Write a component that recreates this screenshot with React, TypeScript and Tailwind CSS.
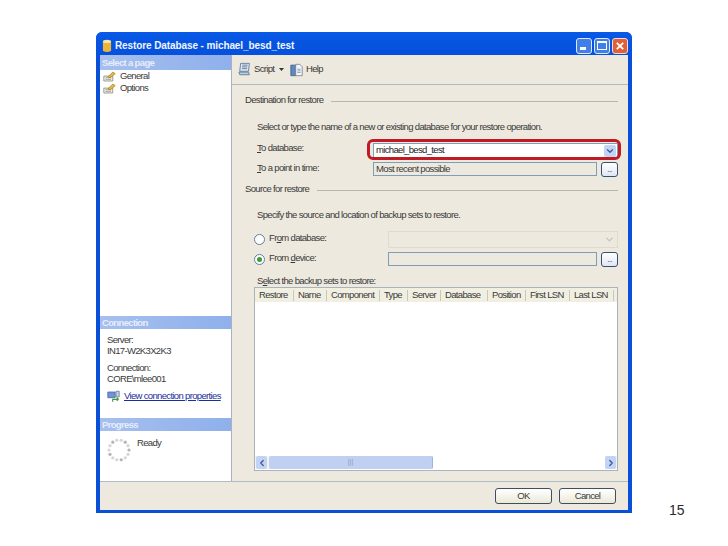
import React from 'react';
import { ChevronDown, ChevronLeft, ChevronRight } from 'lucide-react';

const font = { fontFamily: '"Liberation Sans", Arial, sans-serif' };

const PageIcon = () => (
  <svg width="13" height="11" viewBox="0 0 16 13" className="shrink-0">
    <path d="M1 6h11v6H1z" fill="#f4f1e6" stroke="#8a8a7c" />
    <path d="M3 8h7M3 10h7" stroke="#9a9a90" />
    <path d="M6 7l6-6 3 2-6 5z" fill="#e8b93c" stroke="#8a6a14" strokeWidth="0.7" />
  </svg>
);

const ScriptIcon = () => (
  <svg width="14" height="15" viewBox="0 0 16 16">
    <path d="M3 1h10l-1 9H2z" fill="#dfe8f4" stroke="#5d7896" />
    <path d="M1 11h11l1 3H2z" fill="#b9cde4" stroke="#5d7896" />
    <path d="M5 3h6M4.5 5h6M4.5 7h6" stroke="#5d7896" />
  </svg>
);

const HelpIcon = () => (
  <svg width="13" height="14" viewBox="0 0 16 16">
    <path d="M1 2h6v13H1z" fill="#5f88bd" stroke="#3d628f" />
    <path d="M7 1h5l3 3v11H7z" fill="#f3f6fa" stroke="#6e7f93" />
    <path d="M9 7h4M9 9h4M9 11h4" stroke="#7d8ea4" />
  </svg>
);

const ConnectionIcon = () => (
  <svg width="13" height="13" viewBox="0 0 16 15" className="shrink-0">
    <path d="M1 2h9v7H1z" fill="#6f93d8" stroke="#4b66a6" />
    <path d="M11 1h4v7h-4z" fill="#c6d0e4" stroke="#6b7a98" />
    <path d="M7 14V11h7M12 9l2 2-2 2" fill="none" stroke="#3f9a3c" strokeWidth="1.4" />
  </svg>
);

const Spinner = () => (
  <svg width="24" height="24" viewBox="0 0 24 24" className="shrink-0">
    {Array.from({ length: 14 }).map((_, i) => {
      const a = (i / 14) * Math.PI * 2;
      return (
        <circle
          key={i}
          cx={12 + 10 * Math.cos(a)}
          cy={12 + 10 * Math.sin(a)}
          r="1.6"
          fill={i % 3 === 0 ? '#b4b4b4' : '#d6d6d6'}
        />
      );
    })}
  </svg>
);

const PaneHeader = ({ title, tall }: { title: string; tall?: boolean }) => (
  <div className={`${tall ? 'h-[15px] leading-[15px]' : 'h-[13px] leading-[13px]'} shrink-0 bg-gradient-to-r from-[#a6bfee] to-[#8fb0ec] pl-[2px] text-[9.5px] font-bold text-[#e6edfb]`}>
    {title}
  </div>
);

const GroupTitle = ({ title }: { title: string }) => (
  <div className="flex h-[14px] items-center gap-[8px]">
    <span className="-mt-[2px] whitespace-nowrap">{title}</span>
    <div className="h-px flex-1 bg-[#b9b8a8]" />
  </div>
);

const Underlined = ({ before = '', letter, after }: { before?: string; letter: string; after: string }) => (
  <span className="-mt-[2px] whitespace-nowrap">
    {before}
    <span className="underline">{letter}</span>
    {after}
  </span>
);

const DotsButton = () => (
  <div className="flex h-[15px] w-[17px] shrink-0 items-end justify-center rounded-[3px] border border-[#36506e] bg-gradient-to-b from-white to-[#dfe6f4] pb-[2px] text-[8px] leading-[8px]">
    ...
  </div>
);

const columns = [
  { name: 'Restore', w: 'w-[39px]' },
  { name: 'Name', w: 'w-[33px]' },
  { name: 'Component', w: 'w-[53px]' },
  { name: 'Type', w: 'w-[28px]' },
  { name: 'Server', w: 'w-[33px]' },
  { name: 'Database', w: 'w-[47px]' },
  { name: 'Position', w: 'w-[38px]' },
  { name: 'First LSN', w: 'w-[44px]' },
  { name: 'Last LSN', w: 'w-[44px]' },
];

const App = () => {
  return (
    <div className="relative h-[546px] w-[728px] overflow-hidden bg-white pt-[32px] pl-[96px] text-[9.5px] tracking-[-0.66px] text-[#3a3a3a]" style={font}>
      <div className="flex h-[481px] w-[536px] flex-col rounded-t-[6px] bg-[#0a4fd8]">
        {/* title bar */}
        <div className="flex h-[23px] shrink-0 items-center rounded-t-[6px] bg-gradient-to-b from-[#0a5ae8] via-[#0554e0] to-[#0650dc] pt-[4px] pr-[4px] pl-[6px]">
          <svg width="10" height="14" viewBox="0 0 11 15" className="shrink-0">
            <path d="M1 2.5h9v10c0 2-9 2-9 0z" fill="#eeb43a" />
            <ellipse cx="5.5" cy="2.5" rx="4.5" ry="1.8" fill="#f8e6a8" />
          </svg>
          <span className="ml-[3px] text-[10px] font-bold tracking-[-0.1px] whitespace-nowrap text-[#f0f5ff]">Restore Database - michael_besd_test</span>
          <div className="ml-auto flex gap-[2px]">
            <div className="flex h-[16px] w-[16px] items-end rounded-[3px] border border-[#dfe8fa] bg-[#3f7fe8] pb-[3px] pl-[3px]">
              <div className="h-[3px] w-[6px] bg-white" />
            </div>
            <div className="flex h-[16px] w-[16px] items-center justify-center rounded-[3px] border border-[#dfe8fa] bg-[#3f7fe8]">
              <div className="h-[9px] w-[10px] border border-t-2 border-white" />
            </div>
            <div className="flex h-[16px] w-[16px] items-center justify-center rounded-[3px] border border-[#f0dcd2] bg-[#e0603a]">
              <svg width="10" height="10" viewBox="0 0 11 11">
                <path d="M2 2l7 7M9 2l-7 7" stroke="#fff" strokeWidth="2" />
              </svg>
            </div>
          </div>
        </div>

        {/* body */}
        <div className="mx-[4px] mb-[3px] flex min-h-0 flex-1 flex-col bg-[#ede9de]">
          <div className="flex min-h-0 flex-1">
            {/* left panel */}
            <div className="flex w-[132px] shrink-0 flex-col border-r border-[#a9b3bd] bg-white">
              <PaneHeader title="Select a page" tall />
              <div className="flex h-[12px] items-center gap-[4px] pl-[3px]"><PageIcon />General</div>
              <div className="flex h-[12px] items-center gap-[4px] pl-[3px]"><PageIcon />Options</div>
              <div className="flex-1" />
              <PaneHeader title="Connection" />
              <div className="pt-[5px] pl-[7px] leading-[11px]">
                <div>Server:</div>
                <div>IN17-W2K3X2K3</div>
                <div className="mt-[6px]">Connection:</div>
                <div>CORE\mlee001</div>
              </div>
              <div className="mt-[6px] flex h-[13px] items-center gap-[4px] pl-[7px]">
                <ConnectionIcon />
                <span className="whitespace-nowrap text-[#1c2f9c] underline">View connection properties</span>
              </div>
              <div className="h-[15px] shrink-0" />
              <PaneHeader title="Progress" />
              <div className="flex h-[50px] shrink-0 items-start pt-[6px] pl-[7px]">
                <div className="mt-[1px]"><Spinner /></div>
                <span className="ml-[6px] leading-[12px]">Ready</span>
              </div>
            </div>

            {/* right panel */}
            <div className="flex min-w-0 flex-1 flex-col">
              <div className="flex h-[30px] shrink-0 items-center border-b border-[#aebcc4] pl-[6px]">
                <ScriptIcon />
                <span className="ml-[1px] w-[24px] pl-[1px]">Script</span>
                <svg width="5" height="3" viewBox="0 0 5 3" className="ml-[2px]"><path d="M0 0h5L2.5 3z" fill="#333" /></svg>
                <span className="ml-[6px] flex"><HelpIcon /></span>
                <span className="ml-[3px]">Help</span>
              </div>
              <div className="flex min-h-0 flex-1 flex-col pt-[9px] pr-[10px] pl-[13px]">
                <GroupTitle title="Destination for restore" />
                <div className="mt-[12px] h-[14px] pl-[12px] leading-[14px] whitespace-nowrap">Select or type the name of a new or existing database for your restore operation.</div>
                <div className="mt-[5px] flex h-[20px] items-center pl-[12px]">
                  <div className="flex w-[116px]"><Underlined letter="T" after="o database:" /></div>
                  <div className="relative mt-[3px] flex h-[15px] flex-1 items-center justify-between border border-[#7f9db9] bg-white pr-[1px] pl-[2px] text-[#222]">
                    michael_besd_test
                    <div className="flex h-[12px] w-[12px] items-center justify-center rounded-[2px] bg-[#c3d3f5]">
                      <ChevronDown size={10} strokeWidth={3} className="text-[#3c5a94]" />
                    </div>
                    <div className="absolute -top-[5px] -right-[4px] -bottom-[3px] -left-[7px] rounded-[6px] border-[3px] border-[#c01a24]" />
                  </div>
                </div>
                <div className="flex h-[20px] items-center pl-[12px]">
                  <div className="flex w-[116px]"><Underlined letter="T" after="o a point in time:" /></div>
                  <div className="flex h-[14px] flex-1 items-center border border-[#7f9db9] pl-[2px]">Most recent possible</div>
                  <div className="ml-[4px]"><DotsButton /></div>
                </div>
                <div className="mt-[4px]"><GroupTitle title="Source for restore" /></div>
                <div className="mt-[11px] h-[14px] pl-[12px] leading-[14px] whitespace-nowrap">Specify the source and location of backup sets to restore.</div>
                <div className="mt-[7px] flex h-[20px] items-center pl-[9px]">
                  <div className="h-[11px] w-[11px] shrink-0 rounded-full border border-[#5f7f9c] bg-white" />
                  <span className="ml-[4px] flex w-[119px] shrink-0"><Underlined before="Fr" letter="o" after="m database:" /></span>
                  <div className="flex h-[17px] flex-1 items-center justify-end border border-[#dedbcd] pr-[2px]">
                    <ChevronDown size={11} strokeWidth={3} className="text-[#c4c4bc]" />
                  </div>
                </div>
                <div className="flex h-[20px] items-center pl-[9px]">
                  <div className="flex h-[11px] w-[11px] shrink-0 items-center justify-center rounded-full border border-[#5f7f9c] bg-white">
                    <div className="h-[5px] w-[5px] rounded-full bg-[#3f9a3c]" />
                  </div>
                  <span className="ml-[4px] flex w-[119px] shrink-0"><Underlined before="From " letter="d" after="evice:" /></span>
                  <div className="h-[14px] flex-1 border border-[#7f9db9]" />
                  <div className="ml-[4px]"><DotsButton /></div>
                </div>
                <div className="mt-[6px] h-[12px] pl-[12px] leading-[12px] whitespace-nowrap">S<span className="underline">e</span>lect the backup sets to restore:</div>
                <div className="ml-[9px] flex h-[184px] flex-col border border-[#a9b3bd] bg-white">
                  <div className="flex h-[14px] shrink-0 items-center bg-[#f1efe2]">
                    {columns.map((c) => (
                      <div key={c.name} className={`${c.w} h-[11px] shrink-0 border-r border-[#c9c7ba] pl-[4px] leading-[10px] whitespace-nowrap`}>{c.name}</div>
                    ))}
                  </div>
                  <div className="flex-1" />
                  <div className="mb-[1px] flex h-[13px] shrink-0 items-center bg-[#f4f3ee] px-[1px]">
                    <div className="flex h-[13px] w-[11px] items-center justify-center rounded-[2px] bg-[#c3d3f5]">
                      <ChevronLeft size={10} strokeWidth={3} className="text-[#3c5a94]" />
                    </div>
                    <div className="ml-[2px] flex h-[13px] w-[164px] items-center justify-center rounded-[2px] border-r border-[#9db4dc] bg-[#bfd0f2] text-[7px] tracking-normal text-[#8a9cc0]">|||</div>
                    <div className="h-[13px] flex-1 bg-white" />
                    <div className="flex h-[13px] w-[11px] items-center justify-center rounded-[2px] bg-[#c3d3f5]">
                      <ChevronRight size={10} strokeWidth={3} className="text-[#3c5a94]" />
                    </div>
                  </div>
                </div>
              </div>
            </div>
          </div>

          {/* button bar */}
          <div className="flex h-[29px] shrink-0 items-center justify-end gap-[7px] border-t border-[#aebcc4] pr-[12px]">
            <div className="flex h-[16px] w-[57px] items-center justify-center rounded-[3px] border border-[#3f4f5f] bg-gradient-to-b from-white to-[#ece9d8]">OK</div>
            <div className="flex h-[16px] w-[57px] items-center justify-center rounded-[3px] border border-[#3f4f5f] bg-gradient-to-b from-white to-[#ece9d8]">Cancel</div>
          </div>
        </div>
      </div>
      <div className="absolute top-[502px] left-[669px] text-[14px] leading-[16px] tracking-normal text-[#2a2a2a]">15</div>
    </div>
  );
};

export default App;
